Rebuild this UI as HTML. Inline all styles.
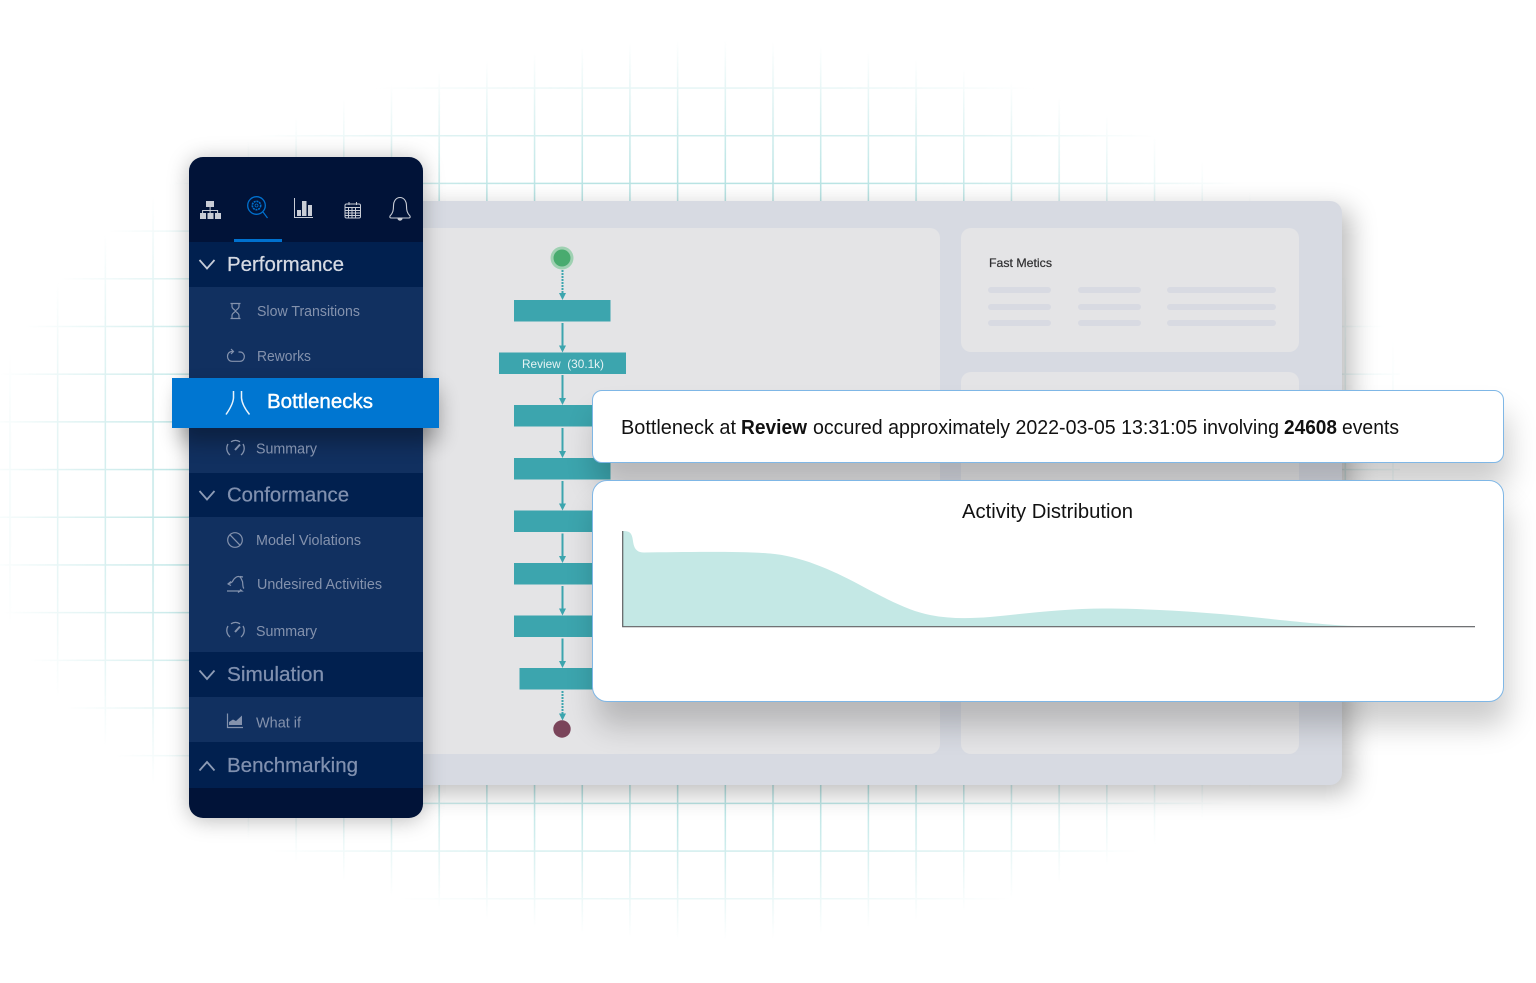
<!DOCTYPE html>
<html><head><meta charset="utf-8"><title>Bottlenecks</title>
<style>
html,body{margin:0;padding:0;background:#fff}
#p{position:relative;width:1536px;height:983px;overflow:hidden;background:#fff;font-family:"Liberation Sans",sans-serif;filter:blur(.35px)}
#p>*{position:absolute}
svg{display:block}
svg text{font-family:"Liberation Sans",sans-serif}
.card{background:#e4e4e6;border-radius:10px}
.pop{background:#fff;border:1px solid #7fb7e6;box-sizing:border-box;left:592px;width:912px;box-shadow:4px 24px 30px rgba(0,0,0,.2)}
</style></head><body><div id="p">
<svg style="left:0;top:0" width="1536" height="983">
<defs>
<pattern id="g" patternUnits="userSpaceOnUse" x="9.2" y="39.6" width="47.69" height="47.69"><path d="M.75 0V47.69M0 .75H47.69" stroke="#b6e3e3" stroke-width="1.6" fill="none"/></pattern>
<radialGradient id="rg" gradientUnits="userSpaceOnUse" cx="0" cy="0" r="1" gradientTransform="translate(705 490) scale(730 450)"><stop offset="0" stop-color="#fff"/><stop offset=".7" stop-color="#fff" stop-opacity=".95"/><stop offset=".88" stop-color="#fff" stop-opacity=".4"/><stop offset="1" stop-color="#fff" stop-opacity="0"/></radialGradient>
<mask id="m" maskUnits="userSpaceOnUse" x="0" y="0" width="1536" height="983"><rect width="1536" height="983" fill="url(#rg)"/></mask>
</defs>
<rect width="1400" height="983" fill="url(#g)" mask="url(#m)"/>
</svg>

<div style="left:400px;top:201px;width:942px;height:584px;background:#d7dae2;border-radius:12px;box-shadow:9px 8px 26px rgba(0,0,0,.27)"></div>
<div class="card" style="left:400px;top:228px;width:540px;height:526px"></div>
<div class="card" style="left:961px;top:228px;width:338px;height:124px"></div>
<div class="card" style="left:961px;top:372px;width:338px;height:382px"></div>

<svg style="left:0;top:0" width="1536" height="983">
<g fill="#d8dae2">
<rect x="988" y="287" width="63" height="6" rx="3"/><rect x="1078" y="287" width="63" height="6" rx="3"/><rect x="1167" y="287" width="109" height="6" rx="3"/>
<rect x="988" y="304" width="63" height="6" rx="3"/><rect x="1078" y="304" width="63" height="6" rx="3"/><rect x="1167" y="304" width="109" height="6" rx="3"/>
<rect x="988" y="320" width="63" height="6" rx="3"/><rect x="1078" y="320" width="63" height="6" rx="3"/><rect x="1167" y="320" width="109" height="6" rx="3"/>
</g>
<text x="989" y="267" font-size="12" textLength="63" lengthAdjust="spacingAndGlyphs" fill="#2e2e30" stroke="#2e2e30" stroke-width=".2">Fast Metics</text>

<circle cx="562" cy="258" r="11.5" fill="#9fd1b2"/><circle cx="562" cy="258" r="8.5" fill="#49ab6f"/>
<g fill="#3ca5ae">
<rect x="514" y="300" width="96.500" height="21.500"/>
<rect x="499" y="352.500" width="127" height="21.500"/>
<rect x="514" y="405" width="96" height="21.500"/>
<rect x="514" y="458" width="96.500" height="21.500"/>
<rect x="514" y="510.500" width="96" height="21.500"/>
<rect x="514" y="563" width="96" height="21.500"/>
<rect x="514" y="615.500" width="96" height="21.500"/>
<rect x="519.500" y="668" width="90" height="21.500"/>
</g>
<g stroke="#3ca5ae" stroke-width="2" fill="none">
<path d="M562.500 270V294" stroke-dasharray="2 1"/><path d="M562.500 323V346M562.500 375V399M562.500 428V451M562.500 481V504M562.500 533.500V557M562.500 586V609M562.500 638.500V662"/>
<path d="M562.500 691V714" stroke-dasharray="2 1"/>
</g>
<g fill="#3ca5ae">
<path d="M559 293h7l-3.500 7zM559 345.500h7l-3.500 7zM559 398h7l-3.500 7zM559 451h7l-3.500 7zM559 503.500h7l-3.500 7zM559 556h7l-3.500 7zM559 608.500h7l-3.500 7zM559 661h7l-3.500 7zM559 713.500h7l-3.500 7z"/>
</g>
<circle cx="562" cy="729" r="8.700" fill="#7a445a"/>
<text x="522" y="368" font-size="12" textLength="82" lengthAdjust="spacingAndGlyphs" fill="#e6f3f4">Review&#160;&#160;(30.1k)</text>
</svg>

<div class="pop" style="top:390px;height:73px;border-radius:10px"></div>
<div class="pop" style="top:480px;height:222px;border-radius:15px"></div>

<svg style="left:0;top:0" width="1536" height="983">
<g font-size="20.500" fill="#111">
<text x="621" y="434" textLength="115" lengthAdjust="spacingAndGlyphs">Bottleneck at</text>
<text x="741" y="434" textLength="66" lengthAdjust="spacingAndGlyphs" font-weight="700">Review</text>
<text x="813" y="434" textLength="466" lengthAdjust="spacingAndGlyphs">occured approximately 2022-03-05 13:31:05 involving</text>
<text x="1284" y="434" textLength="53" lengthAdjust="spacingAndGlyphs" font-weight="700">24608</text>
<text x="1342" y="434" textLength="57" lengthAdjust="spacingAndGlyphs">events</text>
<text x="962" y="518" textLength="171" lengthAdjust="spacingAndGlyphs">Activity Distribution</text>
</g>
<path d="M623 531C630 531 632 533 633 541C634 549 637 552.500 644 552.500C680 552 740 551 770 553.500C800 556 830 569 860 585C890 601 910 611 930 615C950 619 970 618.500 990 617C1030 613 1070 608 1110 608.500C1160 609 1220 613 1280 620C1310 623 1340 626 1360 626L623 626Z" fill="#c4e8e5"/>
<path d="M622.700 531V626.700H1475" fill="none" stroke="#5c5f60" stroke-width="1.200"/>
</svg>

<div style="left:189px;top:157px;width:234px;height:660.500px;background:#011338;border-radius:14px;box-shadow:0 2px 22px rgba(0,0,0,.28)"></div>
<svg style="left:0;top:0" width="1536" height="983">
<clipPath id="cl"><rect x="189" y="157" width="234" height="661" rx="14"/></clipPath>
<g clip-path="url(#cl)">
<rect x="189" y="242" width="234" height="45" fill="#01204f"/>
<rect x="189" y="287" width="234" height="186" fill="#113060"/>
<rect x="189" y="473" width="234" height="44" fill="#01204f"/>
<rect x="189" y="517" width="234" height="135" fill="#113060"/>
<rect x="189" y="652" width="234" height="45" fill="#01204f"/>
<rect x="189" y="697" width="234" height="45" fill="#113060"/>
<rect x="189" y="742" width="234" height="46" fill="#01204f"/>
</g>
<rect x="234" y="239" width="48" height="3" fill="#0071cf"/>
<defs><filter id="bl" x="-20%" y="-50%" width="140%" height="200%"><feGaussianBlur stdDeviation="11"/></filter></defs>
<rect x="180" y="390" width="258" height="52" fill="#000" opacity=".32" filter="url(#bl)"/>
<rect x="172" y="378" width="267" height="50" fill="#0076d1"/>

<!-- top icons -->
<g fill="#c9cdd6">
<rect x="206" y="201" width="8" height="6"/><rect x="200" y="213" width="6" height="6"/><rect x="207.500" y="213" width="6" height="6"/><rect x="215" y="213" width="6" height="6"/>
<path d="M209.600 207h1v3h7.500v3h-1v-2h-6.500v2h-1v-2h-6.500v2h-1v-3h7.500z"/>
<rect x="294" y="198" width="1" height="19"/><rect x="294" y="217" width="19" height="1"/>
<rect x="297" y="210" width="4" height="6"/><rect x="302" y="201" width="4.500" height="15"/><rect x="308" y="205" width="4" height="11"/>
</g>
<g fill="none" stroke="#0071cf">
<circle cx="256.500" cy="205.500" r="8.800" stroke-width="1.300"/>
<path d="M263 212L267.500 218" stroke-width="1.200"/>
<circle cx="256.500" cy="205.500" r="4.200" stroke-width="1.600" stroke-dasharray="2 .8"/>
<circle cx="256.500" cy="205.500" r="1.500" stroke-width=".8"/>
</g>
<g fill="none" stroke="#c9cdd6" stroke-width="1">
<rect x="345" y="204" width="15.500" height="14" rx="1.500"/>
<path d="M345 207.500h15.500M345 210.500h15.500M345 213h15.500M345 215.500h15.500M348.500 207.500V218M352 207.500V218M355.500 207.500V218M349 202v3M356.500 202v3"/>
<path d="M390 216C393 213 393.500 210 393.500 206C393.500 200.500 396.500 197.500 400 197.500C403.500 197.500 406.500 200.500 406.500 206C406.500 210 407 213 410 216C410.500 217.500 410 218 408.500 218H391.500C390 218 389.500 217.500 390 216Z" stroke-width="1.100"/>
</g>
<path d="M397.500 218.500h5a2.500 2.200 0 0 1-5 0z" fill="#c9cdd6"/>

<!-- chevrons -->
<g fill="none" stroke="#c5cbd8" stroke-width="1.800">
<path d="M199.500 260L207 268.500L214.500 260"/>
<path d="M199.500 491L207 499.500L214.500 491" stroke="#8e9cb6"/>
<path d="M199.500 670.500L207 679L214.500 670.500" stroke="#8e9cb6"/>
<path d="M199.500 770.500L207 762L214.500 770.500" stroke="#8e9cb6"/>
</g>

<!-- item icons -->
<g fill="none" stroke="#8492ad" stroke-width="1.200">
<path d="M230.500 303.500h10M230.500 318.500h10M232 304v2.500c0 2.500 3.500 3.500 3.500 4.500s-3.500 2-3.500 4.500v3M239 304v2.500c0 2.500-3.500 3.500-3.500 4.500s3.500 2 3.500 4.500v3"/>
<path d="M231 349l2.500 2.500L231 354M233 351.500h-1c-6 0-6 9.800 0 9.800h8c5.800 0 5.800-9.300 0-9.300h-1.500"/>
<path d="M230 455a8.500 8.500 0 0 1-2-11M231 441.800a8.500 8.500 0 0 1 9 0M243 444a8.500 8.500 0 0 1-2 11" stroke-width="1.300"/>
<path d="M235 450l5-5.500" stroke-width="2"/>
<circle cx="235" cy="540" r="7.300"/><path d="M230 534.800L240 545.200"/>
<path d="M227 591h15l-2-1.500M240 591l-2 1.500M227.500 584c2-.5 4-1 5-2.500c1.500-3.500 5-6 7.500-4.500c1.500 1 1.500 3 2.500 4.500c.5 3 0 6 1.500 7M228 584l3 1.500M228 584l3-2.500M240 576.500l3 .5"/>
<path d="M230 637a8.500 8.500 0 0 1-2-11M231 623.800a8.500 8.500 0 0 1 9 0M243 626a8.500 8.500 0 0 1-2 11" stroke-width="1.300"/>
<path d="M235 632l5-5.500" stroke-width="2"/>
<path d="M227.500 713.500V727.500H243" />
</g>
<path d="M229 725v-3l4-2.500 3 1.500 6-5.500v9.500z" fill="#8492ad"/>
<path d="M233.500 391V398C233 404 229.500 409.500 226 414.500M241.500 391V398C242 404 245.500 409.500 249.500 414.500" fill="none" stroke="#eaf3fb" stroke-width="1.500"/>

<!-- labels -->
<g font-size="20.500">
<text x="227" y="271" textLength="117" lengthAdjust="spacingAndGlyphs" fill="#d6dae3" stroke="#d6dae3" stroke-width=".25">Performance</text>
<text x="267" y="408" textLength="106" lengthAdjust="spacingAndGlyphs" fill="#fff" stroke="#fff" stroke-width=".4">Bottlenecks</text>
<text x="227" y="501.500" textLength="122" lengthAdjust="spacingAndGlyphs" fill="#8090af" stroke="#8090af" stroke-width=".25">Conformance</text>
<text x="227" y="681" textLength="97" lengthAdjust="spacingAndGlyphs" fill="#8090af" stroke="#8090af" stroke-width=".25">Simulation</text>
<text x="227" y="772" textLength="131" lengthAdjust="spacingAndGlyphs" fill="#8090af" stroke="#8090af" stroke-width=".25">Benchmarking</text>
</g>
<g font-size="14.500" fill="#8492ad">
<text x="257" y="316" textLength="103" lengthAdjust="spacingAndGlyphs">Slow Transitions</text>
<text x="257" y="361" textLength="54" lengthAdjust="spacingAndGlyphs">Reworks</text>
<text x="256" y="453.500" textLength="61" lengthAdjust="spacingAndGlyphs">Summary</text>
<text x="256" y="545" textLength="105" lengthAdjust="spacingAndGlyphs">Model Violations</text>
<text x="257" y="589" textLength="125" lengthAdjust="spacingAndGlyphs">Undesired Activities</text>
<text x="256" y="636" textLength="61" lengthAdjust="spacingAndGlyphs">Summary</text>
<text x="256" y="727.500" textLength="45" lengthAdjust="spacingAndGlyphs">What if</text>
</g>
</svg>
</div></body></html>
